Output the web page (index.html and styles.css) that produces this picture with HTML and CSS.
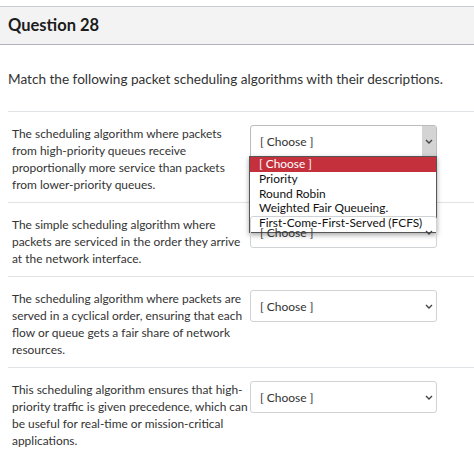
FILE: index.html
```html
<!DOCTYPE html>
<html lang="en">
<head>
    <meta charset="UTF-8">
    <meta name="viewport" content="width=device-width, initial-scale=1.0">
    <link rel="stylesheet" href="styles.css">
</head>
<body>
    <div class="question">
        <div class="header">Question 28</div>
        <div class="content">
            <p class="intro">Match the following packet scheduling algorithms with their descriptions.</p>
            <div class="answers">
                <div class="row">
                    <div class="desc">The scheduling algorithm where packets from&nbsp;high-priority queues receive proportionally more service than packets from&nbsp;lower-priority queues.</div>
                    <div class="select-wrap">
                        <div class="select open">
                            <span>[ Choose ]</span>
                            <span class="arrow"><svg width="8" height="5" viewBox="0 0 8 5"><path d="M1 1l3 3 3-3" fill="none" stroke="#444" stroke-width="1.4"/></svg></span>
                        </div>
                        <ul class="options">
                            <li class="selected">[ Choose ]</li>
                            <li>Priority</li>
                            <li>Round Robin</li>
                            <li>Weighted Fair Queueing.</li>
                            <li>First-Come-First-Served (FCFS)</li>
                        </ul>
                    </div>
                </div>
                <div class="row">
                    <div class="desc">The simple scheduling algorithm where packets are serviced in the order they arrive at the network interface.</div>
                    <div class="select-wrap">
                        <div class="select">
                            <span>[ Choose ]</span>
                            <span class="arrow"><svg width="8" height="5" viewBox="0 0 8 5"><path d="M1 1l3 3 3-3" fill="none" stroke="#444" stroke-width="1.4"/></svg></span>
                        </div>
                    </div>
                </div>
                <div class="row">
                    <div class="desc">The scheduling algorithm where packets are served in a cyclical order, ensuring that each flow or queue gets a fair share of network resources.</div>
                    <div class="select-wrap">
                        <div class="select">
                            <span>[ Choose ]</span>
                            <span class="arrow"><svg width="8" height="5" viewBox="0 0 8 5"><path d="M1 1l3 3 3-3" fill="none" stroke="#444" stroke-width="1.4"/></svg></span>
                        </div>
                    </div>
                </div>
                <div class="row">
                    <div class="desc">This scheduling algorithm ensures that high-priority traffic is given precedence, which can be useful for real-time or mission-critical applications.</div>
                    <div class="select-wrap">
                        <div class="select">
                            <span>[ Choose ]</span>
                            <span class="arrow"><svg width="8" height="5" viewBox="0 0 8 5"><path d="M1 1l3 3 3-3" fill="none" stroke="#444" stroke-width="1.4"/></svg></span>
                        </div>
                    </div>
                </div>
            </div>
        </div>
    </div>
</body>
</html>
```
FILE: styles.css
```css
body {
    margin: 0;
    font-family: Lato, "Open Sans", sans-serif;
    color: #2d3b45;
    background: #fff;
}

.question {
    margin-top: 6px;
}

.header {
    height: 37px;
    line-height: 37px;
    padding-left: 8px;
    background-color: #f3f3f3;
    border-top: 1px solid #c7cdd1;
    border-bottom: 1px solid #b0b4b8;
    font-size: 16.5px;
    font-weight: bold;
    color: #1c1c1c;
}

.content {
    padding-left: 8px;
}

.intro {
    margin: 0;
    padding: 25px 0 23px;
    font-size: 13.6px;
    line-height: 18px;
    color: #333;
    white-space: nowrap;
}

.row {
    display: flex;
    padding: 13px 0 9px 4px;
    border-top: 1px solid #e1e4e6;
}

.desc {
    width: 238px;
    font-size: 11.95px;
    line-height: 17px;
    color: #333;
}

.select-wrap {
    position: relative;
    width: 187px;
}

.select {
    display: flex;
    justify-content: space-between;
    align-items: center;
    height: 32px;
    box-sizing: border-box;
    padding-left: 9px;
    border: 1px solid #cfd3d6;
    border-radius: 3px;
    font-size: 12px;
    color: #333;
}

.arrow {
    width: 14px;
    height: 100%;
    display: flex;
    align-items: center;
    justify-content: center;
}

.select.open {
    border-color: #b9bdc0;
    border-radius: 3px 3px 0 0;
}

.select.open .arrow {
    background-color: #d4d4d4;
}

.options {
    position: absolute;
    top: 31px;
    left: -1px;
    width: 188px;
    margin: 0;
    padding: 0 0 1px;
    list-style: none;
    background: #fff;
    border: 1px solid #555;
    box-shadow: 0 2px 5px rgba(0, 0, 0, 0.35);
    box-sizing: border-box;
}

.options li {
    height: 14.8px;
    line-height: 14.8px;
    padding-left: 9px;
    font-size: 11.9px;
    color: #111;
    white-space: nowrap;
}

.options li.selected {
    background-color: #c4303c;
    color: #fff;
}
```
